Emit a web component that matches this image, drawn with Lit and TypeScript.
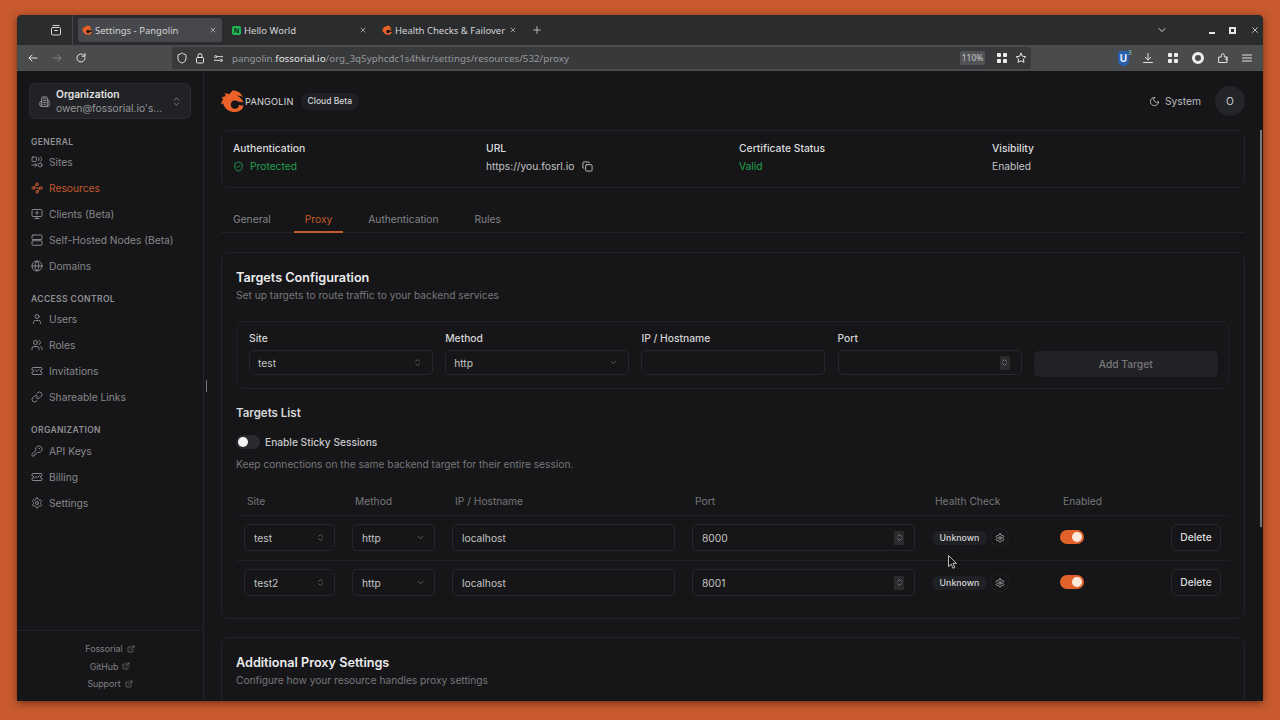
import { LitElement, html, css, svg } from 'lit';
import { customElement } from 'lit/decorators.js';

// lucide style strokes, viewBox 24
const ICONS: Record<string, unknown> = {
  building: svg`<path d="M6 22V4a2 2 0 0 1 2-2h8a2 2 0 0 1 2 2v18Z"/><path d="M6 12H4a2 2 0 0 0-2 2v6a2 2 0 0 0 2 2h2"/><path d="M18 9h2a2 2 0 0 1 2 2v9a2 2 0 0 1-2 2h-2"/><path d="M10 6h4M10 10h4M10 14h4M10 18h4"/>`,
  updown: svg`<path d="m7 15 5 5 5-5"/><path d="m7 9 5-5 5 5"/>`,
  down: svg`<path d="m6 9 6 6 6-6"/>`,
  sites: svg`<rect x="2" y="2" width="9" height="9" rx="2"/><path d="M15 3c2 1.500 2 5.500 0 7"/><path d="M19 2c3.500 2.500 3.500 6.500 0 9"/><circle cx="18" cy="18" r="4"/><path d="M2 18h9"/><path d="m8 14.500 3.500 3.500L8 21.500"/>`,
  waypoints: svg`<circle cx="12" cy="4.500" r="2.500"/><path d="m10.200 6.300-3.900 3.900"/><circle cx="4.500" cy="12" r="2.500"/><path d="M7 12h10"/><circle cx="19.500" cy="12" r="2.500"/><path d="m13.800 17.700 3.900-3.900"/><circle cx="12" cy="19.500" r="2.500"/>`,
  monitor: svg`<path d="m9 10 3-3 3 3"/><path d="M12 13V7"/><rect x="2" y="3" width="20" height="14" rx="2"/><path d="M12 17v4M8 21h8"/>`,
  server: svg`<rect x="2" y="2" width="20" height="9" rx="2"/><rect x="2" y="13.500" width="20" height="9" rx="2"/>`,
  globe: svg`<circle cx="12" cy="12" r="10"/><path d="M12 2a14.500 14.500 0 0 0 0 20 14.500 14.500 0 0 0 0-20"/><path d="M2 12h20"/>`,
  user: svg`<path d="M19 21v-2a4 4 0 0 0-4-4H9a4 4 0 0 0-4 4v2"/><circle cx="12" cy="7" r="4"/>`,
  users: svg`<path d="M16 21v-2a4 4 0 0 0-4-4H6a4 4 0 0 0-4 4v2"/><circle cx="9" cy="7" r="4"/><path d="M22 21v-2a4 4 0 0 0-3-3.870"/><path d="M16 3.130a4 4 0 0 1 0 7.750"/>`,
  ticket: svg`<path d="M2 9a3 3 0 0 1 0 6v2a2 2 0 0 0 2 2h16a2 2 0 0 0 2-2v-2a3 3 0 0 1 0-6V7a2 2 0 0 0-2-2H4a2 2 0 0 0-2 2Z"/><path d="m8 9 4 4 4-4"/>`,
  billing: svg`<path d="M2 9a3 3 0 0 1 0 6v2a2 2 0 0 0 2 2h16a2 2 0 0 0 2-2v-2a3 3 0 0 1 0-6V7a2 2 0 0 0-2-2H4a2 2 0 0 0-2 2Z"/><path d="m7 14 3-3 3 2 4-4"/>`,
  link: svg`<path d="M10 13a5 5 0 0 0 7.540.540l3-3a5 5 0 0 0-7.070-7.070l-1.720 1.710"/><path d="M14 11a5 5 0 0 0-7.540-.540l-3 3a5 5 0 0 0 7.070 7.070l1.710-1.710"/>`,
  key: svg`<path d="M2.586 17.414A2 2 0 0 0 2 18.828V21a1 1 0 0 0 1 1h3a1 1 0 0 0 1-1v-1a1 1 0 0 1 1-1h1a1 1 0 0 0 1-1v-1a1 1 0 0 1 1-1h.172a2 2 0 0 0 1.414-.586l.814-.814a6.500 6.500 0 1 0-4-4z"/><circle cx="16.500" cy="7.500" r=".5"/>`,
  cog: svg`<path d="M12.220 2h-.44a2 2 0 0 0-2 2v.18a2 2 0 0 1-1 1.730l-.43.25a2 2 0 0 1-2 0l-.15-.08a2 2 0 0 0-2.730.73l-.22.38a2 2 0 0 0 .73 2.730l.15.1a2 2 0 0 1 1 1.720v.51a2 2 0 0 1-1 1.740l-.15.09a2 2 0 0 0-.73 2.730l.22.38a2 2 0 0 0 2.730.73l.15-.08a2 2 0 0 1 2 0l.43.25a2 2 0 0 1 1 1.730V20a2 2 0 0 0 2 2h.44a2 2 0 0 0 2-2v-.18a2 2 0 0 1 1-1.730l.43-.25a2 2 0 0 1 2 0l.15.08a2 2 0 0 0 2.730-.73l.22-.39a2 2 0 0 0-.73-2.730l-.15-.08a2 2 0 0 1-1-1.740v-.5a2 2 0 0 1 1-1.740l.15-.09a2 2 0 0 0 .73-2.730l-.22-.38a2 2 0 0 0-2.730-.73l-.15.08a2 2 0 0 1-2 0l-.43-.25a2 2 0 0 1-1-1.730V4a2 2 0 0 0-2-2z"/><circle cx="12" cy="12" r="3"/>`,
  external: svg`<path d="M15 3h6v6"/><path d="M10 14 21 3"/><path d="M18 13v6a2 2 0 0 1-2 2H5a2 2 0 0 1-2-2V8a2 2 0 0 1 2-2h6"/>`,
  moon: svg`<path d="M12 3a6 6 0 0 0 9 9 9 9 0 1 1-9-9Z"/>`,
  shieldCheck: svg`<path d="M20 13c0 5-3.500 7.500-7.660 8.950a1 1 0 0 1-.67-.01C7.500 20.500 4 18 4 13V6a1 1 0 0 1 1-1c2 0 4.500-1.200 6.240-2.720a1.170 1.170 0 0 1 1.520 0C14.510 3.810 17 5 19 5a1 1 0 0 1 1 1z"/><path d="m9 12 2 2 4-4"/>`,
  shield: svg`<path d="M20 13c0 5-3.500 7.500-7.660 8.950a1 1 0 0 1-.67-.01C7.500 20.500 4 18 4 13V6a1 1 0 0 1 1-1c2 0 4.500-1.200 6.240-2.720a1.170 1.170 0 0 1 1.520 0C14.510 3.810 17 5 19 5a1 1 0 0 1 1 1z"/>`,
  copy: svg`<rect x="8" y="8" width="14" height="14" rx="2"/><path d="M4 16c-1.100 0-2-.9-2-2V4c0-1.100.9-2 2-2h10c1.100 0 2 .9 2 2"/>`,
  // browser chrome
  tabsBtn: svg`<rect x="3" y="7" width="18" height="15" rx="2"/><path d="M6 3h12"/><path d="M9 13h6"/>`,
  back: svg`<path d="M20 12H4"/><path d="m10 6-6 6 6 6"/>`,
  forward: svg`<path d="M4 12h16"/><path d="m14 6 6 6-6 6"/>`,
  reload: svg`<path d="M20 12a8 8 0 1 1-2.500-5.800L20 8.500"/><path d="M20 3v5.500h-5.500"/>`,
  lock: svg`<rect x="5" y="11" width="14" height="11" rx="2"/><path d="M8 11V7a4 4 0 0 1 8 0v4"/>`,
  perms: svg`<path d="M10 8h11"/><circle cx="6" cy="8" r="2.500"/><path d="M3 16h11"/><circle cx="18" cy="16" r="2.500"/>`,
  star: svg`<path d="M12 2.500l2.950 6 6.600.95-4.780 4.650 1.130 6.570L12 17.570l-5.900 3.100 1.130-6.570-4.780-4.650 6.600-.95z"/>`,
  download: svg`<path d="M12 3v13"/><path d="m6.500 10.500 5.500 5.500 5.500-5.500"/><path d="M3 21h18"/>`,
  puzzle: svg`<path d="M4 10h4.500V6.500a3 3 0 0 1 6 0V10H20v11H4z"/><path d="M20 10v3h-2v3h2"/>`,
  menu: svg`<path d="M3 6h18M3 12h18M3 18h18"/>`,
  plus: svg`<path d="M12 4v16M4 12h16"/>`,
  close: svg`<path d="M6 6l12 12M18 6 6 18"/>`,
};

const icon = (name: string, cls = '') =>
  html`<svg class="ic ${cls}" viewBox="0 0 24 24" fill="none" stroke="currentColor" stroke-width="2" stroke-linecap="round" stroke-linejoin="round">${ICONS[name]}</svg>`;

const logoMark = (cls: string) => html`<svg class=${cls} viewBox="0 0 24 24">
  <path fill="#e8622a" d="M12 1C17 .8 21 3.500 22.800 8 20.800 6.700 18.500 6.200 16.500 6.600 20.500 8 23.500 11.500 23.500 16 23.500 20.500 19.500 23.500 14.500 23.500 8.500 23.500 3.500 20 2.300 14.500L.2 15.500C.5 13 1.300 11.300 2.500 10L.3 8.700C1.800 7.500 3.500 7 5 7L3.800 4.300C5.800 4 7.400 4.300 8.700 5Z"/>
  <circle cx="14.500" cy="15.800" r="4.200" fill="#161618"/>
  <path fill="#161618" d="M17 12.500 24 13.500 23.500 17 18 16Z"/>
</svg>`;

type NavItem = { label: string; icon: string; active?: boolean };
const NAV: { title: string; items: NavItem[] }[] = [
  {
    title: 'GENERAL',
    items: [
      { label: 'Sites', icon: 'sites' },
      { label: 'Resources', icon: 'waypoints', active: true },
      { label: 'Clients (Beta)', icon: 'monitor' },
      { label: 'Self-Hosted Nodes (Beta)', icon: 'server' },
      { label: 'Domains', icon: 'globe' },
    ],
  },
  {
    title: 'ACCESS CONTROL',
    items: [
      { label: 'Users', icon: 'user' },
      { label: 'Roles', icon: 'users' },
      { label: 'Invitations', icon: 'ticket' },
      { label: 'Shareable Links', icon: 'link' },
    ],
  },
  {
    title: 'ORGANIZATION',
    items: [
      { label: 'API Keys', icon: 'key' },
      { label: 'Billing', icon: 'billing' },
      { label: 'Settings', icon: 'cog' },
    ],
  },
];

const TARGETS = [
  { site: 'test', port: '8000' },
  { site: 'test2', port: '8001' },
];

@customElement('app-root')
export class AppRoot extends LitElement {
  static styles = css`
    :host {
      display: block;
      width: 1280px;
      height: 720px;
      box-sizing: border-box;
      padding: 15px 17px 19px;
      background: #c85a2e;
      font-family: Inter, 'Liberation Sans', sans-serif;
      color: #d8d8da;
      overflow: hidden;
    }
    * { box-sizing: border-box; }
    .ic { display: block; flex: none; width: 13px; height: 13px; }
    .i8 { width: 8px; height: 8px; }
    .i9 { width: 9px; height: 9px; }
    .i10 { width: 10px; height: 10px; }
    .i11 { width: 11px; height: 11px; }
    .i12 { width: 12px; height: 12px; }

    .window {
      position: relative;
      height: 686px;
      display: flex;
      flex-direction: column;
      border-radius: 5px 5px 0 0;
      overflow: hidden;
      background: #161618;
      box-shadow: 0 2px 8px rgba(40, 12, 0, 0.55);
    }

    /* browser chrome */
    .tabstrip {
      height: 30px;
      flex: none;
      display: flex;
      align-items: center;
      background: #2b2c2e;
      color: #d4d4d6;
      font-family: 'Noto Sans', sans-serif;
      font-size: 9.500px;
    }
    .tabs-btn {
      width: 56px;
      height: 30px;
      display: flex;
      align-items: center;
      justify-content: center;
      padding-left: 29px;
      padding-right: 6px;
      border-right: 1px solid #46474a;
      flex: none;
    }
    .tabs { display: flex; gap: 6px; margin-left: 5px; }
    .tab {
      width: 144px;
      height: 24px;
      padding: 0 5px 0 4px;
      display: flex;
      align-items: center;
      gap: 3px;
      border-radius: 3px;
    }
    .tab.on { background: #47484b; }
    .tab span { flex: 1; white-space: nowrap; overflow: hidden; }
    .fav { width: 10px; height: 10px; flex: none; }
    .fav-n {
      width: 9px;
      height: 9px;
      flex: none;
      border-radius: 2px;
      background: #22b455;
      color: #10241a;
      font-size: 7px;
      font-weight: 700;
      line-height: 9px;
      text-align: center;
    }
    .new-tab { margin-left: 10px; }
    .strip-end { margin-left: auto; display: flex; align-items: center; }
    .strip-end .chev { margin-right: 41px; }
    .win-ctl { display: flex; align-items: center; gap: 14px; padding-right: 3px; }
    .win-min { width: 6px; height: 2px; margin-top: 5px; background: #e6e6e6; }
    .win-max { width: 7px; height: 7px; border: 2px solid #e6e6e6; }

    .toolbar {
      height: 26px;
      flex: none;
      display: flex;
      align-items: center;
      background: #4a4b4d;
      color: #e4e4e4;
      font-family: 'Noto Sans', sans-serif;
    }
    .nav-btns { display: flex; padding-left: 4px; width: 155px; flex: none; }
    .nav-btns div { width: 24px; display: flex; justify-content: center; }
    .nav-btns .off { color: #838486; }
    .urlbar {
      width: 859px;
      height: 22px;
      flex: none;
      display: flex;
      align-items: center;
      padding: 0 4px 0 1px;
      background: #38393b;
      border-radius: 3px;
    }
    .urlbar .sl { width: 18px; display: flex; justify-content: center; }
    .url { margin-left: 5px; font-size: 9.800px; color: #97989a; white-space: nowrap; }
    .url b { font-weight: 400; color: #e4e4e4; }
    .zoom {
      margin-left: auto;
      width: 25px;
      height: 14px;
      margin-right: 12px;
      background: #525356;
      border-radius: 2px;
      font-size: 8.500px;
      line-height: 14px;
      text-align: center;
      color: #c8c8c8;
    }
    .qr { width: 10px; height: 10px; display: grid; grid-template-columns: 1fr 1fr; gap: 1.500px; }
    .urlbar .qr { margin-right: 8px; }
    .qr i { background: #eee; border-radius: 1px; }
    .tools { display: flex; align-items: center; margin-left: 80px; }
    .tools > div { width: 24.800px; display: flex; justify-content: center; }
    .vpn { position: relative; }
    .vpn .shield {
      width: 11px;
      height: 15px;
      border-radius: 3px 3px 6px 6px;
      background: #2a5fb0;
      display: flex;
      align-items: center;
      justify-content: center;
      font-size: 10px;
      font-weight: 700;
      font-family: Inter, sans-serif;
      color: #e6eefb;
    }
    .vpn small {
      position: absolute;
      top: -3px;
      right: 4px;
      font-size: 7px;
      color: #78c8d8;
    }
    .ublock { width: 12px; height: 12px; border-radius: 50%; border: 3.500px solid #eee; }

    /* app */
    .app { flex: 1; min-height: 0; display: flex; }
    .sidebar {
      width: 187px;
      flex: none;
      display: flex;
      flex-direction: column;
      padding-top: 12px;
      border-right: 1px solid #222326;
    }
    .org {
      margin: 0 12px;
      height: 36px;
      display: flex;
      align-items: center;
      padding: 0 8px 0 9px;
      gap: 6px;
      border: 1px solid #2b2c2f;
      border-radius: 6px;
      background: #212225;
    }
    .org-ic { color: #a3a3a6; }
    .org-text { flex: 1; min-width: 0; }
    .org-name { font-size: 10.250px; line-height: 14px; font-weight: 600; color: #e2e2e4; }
    .org-mail { font-size: 10.250px; line-height: 15px; color: #96969a; white-space: nowrap; }
    .org-chev { color: #85858a; }
    .group { padding: 0 14px; margin-top: 14px; }
    .org + .group { margin-top: 17px; }
    .group-title {
      font-size: 8.500px;
      line-height: 12px;
      font-weight: 600;
      letter-spacing: 0.4px;
      color: #8f8f93;
      margin-bottom: 1.200px;
    }
    .nav-item {
      height: 26px;
      display: flex;
      align-items: center;
      gap: 6px;
      font-size: 10.250px;
      color: #88888c;
    }
    .nav-item.on { color: #c4592b; }
    .side-foot {
      margin-top: auto;
      height: 71px;
      padding-top: 9px;
      border-top: 1px solid #202124;
      display: flex;
      flex-direction: column;
      align-items: center;
      color: #808084;
      font-size: 8.800px;
    }
    .side-foot div { height: 17.600px; display: flex; align-items: center; gap: 4px; }

    .main { flex: 1; min-width: 0; display: flex; }
    .content { flex: 1; min-width: 0; padding: 0 15px 0 17px; overflow: hidden; }
    .rail { width: 3px; flex: none; padding-top: 59px; padding-right: 1px; }
    .thumb { height: 397px; background: #77777a; }

    .top {
      height: 59px;
      display: flex;
      align-items: center;
      padding-top: 1px;
    }
    .logo { width: 23px; height: 24px; flex: none; }
    .brand { margin-left: 1px; font-size: 9.200px; letter-spacing: 0.2px; color: #dcdcde; }
    .beta {
      margin-left: 7px;
      height: 17px;
      padding: 0 7px;
      border-radius: 9px;
      background: #1f2023;
      font-size: 8.500px;
      font-weight: 500;
      line-height: 17px;
      color: #d4d4d6;
    }
    .top-end { margin-left: auto; display: flex; align-items: center; font-size: 10.250px; color: #bdbdc0; }
    .top-end .ic { margin-right: 5px; }
    .avatar {
      width: 30px;
      height: 30px;
      margin-left: 14px;
      border-radius: 50%;
      background: #242528;
      display: flex;
      align-items: center;
      justify-content: center;
      color: #c8c8ca;
    }

    .card { border: 1px solid #222326; border-radius: 8px; }
    .info {
      height: 58px;
      padding: 10px 11px 0;
      display: grid;
      grid-template-columns: repeat(4, 253px);
    }
    .info-label { font-size: 10.350px; line-height: 14px; font-weight: 500; color: #dcdcde; }
    .info-val { margin-top: 3px; height: 16px; display: flex; align-items: center; font-size: 10.250px; color: #c4c4c6; }
    .green { color: #22a04c; gap: 6px; }
    .copy { margin-left: 8px; color: #c4c4c6; }

    .page-tabs {
      height: 45px;
      display: flex;
      align-items: flex-end;
      border-bottom: 1px solid #212225;
      font-size: 10.250px;
      color: #838387;
    }
    .page-tab { height: 22px; padding: 2px 11px 0; margin-right: 14px; margin-bottom: -1px; }
    .page-tab:first-child { padding-left: 12px; margin-right: 12px; }
    .page-tab.on { color: #c4592b; border-bottom: 2px solid #c4592b; }

    .section { margin-top: 18px; padding: 15px 15px 0 14px; }
    .targets { margin-top: 19px; height: 367px; }
    .h2 { font-size: 12.650px; line-height: 20px; font-weight: 600; color: #ececee; }
    .sub { font-size: 10.200px; line-height: 15px; color: #77777b; }
    .extra { height: 90px; }

    .add-form {
      margin-top: 18px;
      height: 68px;
      padding: 9px 12px 0;
      border: 1px solid #202124;
      border-radius: 7px;
      display: grid;
      grid-template-columns: repeat(5, 184px);
      column-gap: 12.200px;
    }
    .lbl { font-size: 10.300px; line-height: 14px; font-weight: 500; color: #d4d4d6; margin-bottom: 5px; }
    .field {
      display: flex;
      align-items: center;
      justify-content: space-between;
      border: 1px solid #27282b;
      border-radius: 5px;
      padding: 0 9px;
      font-size: 10.250px;
      color: #c4c4c6;
    }
    .add-form .field { height: 25px; padding: 0 10px 0 8px; }
    .spin {
      width: 10px;
      height: 14px;
      margin-right: 1px;
      background: #2a2b2d;
      color: #8c8c90;
      display: flex;
      align-items: center;
      justify-content: center;
      border-radius: 1px;
    }
    .add-btn {
      align-self: end;
      height: 26px;
      margin-bottom: 11px;
      border-radius: 5px;
      background: #212225;
      color: #78787c;
      font-size: 10.250px;
      font-weight: 500;
      line-height: 26px;
      text-align: center;
    }

    .h3 { margin-top: 15px; font-size: 11.500px; line-height: 18px; font-weight: 600; color: #d8d8da; }
    .sticky { margin-top: 13px; height: 14px; display: flex; align-items: center; gap: 5px; font-size: 10.200px; font-weight: 500; color: #c8c8ca; }
    .sw {
      width: 24px;
      height: 14px;
      flex: none;
      border-radius: 7px;
      background: #292a2d;
      padding: 2px;
    }
    .sw i { display: block; width: 10px; height: 10px; border-radius: 50%; background: #f4f4f4; }
    .sw.on { background: #e0622a; padding-left: 12px; }
    .sw.on i { background: #fde9dc; }
    .sticky-note { margin-top: 8px; font-size: 10.200px; line-height: 15px; color: #77777b; }

    .tbl-head, .tbl-row {
      display: grid;
      grid-template-columns: 108px 100px 240px 240px 128px 60px 1fr;
      padding: 0 8px;
      align-items: center;
      border-bottom: 1px solid #1f2023;
    }
    .tbl-head {
      margin-top: 22px;
      height: 22px;
      font-size: 10.250px;
      color: #77777b;
      padding-bottom: 7px;
    }
    .tbl-head div { padding-left: 3px; }
    .tbl-row { height: 44.500px; }
    .tbl-row:last-child { border-bottom: 0; }
    .tbl-row .field { height: 27px; }
    .w-site { width: 91px; }
    .w-method { width: 83px; }
    .w-wide { width: 223px; }
    .chev-dim { color: #707074; }
    .health { display: flex; align-items: center; gap: 3px; }
    .badge {
      height: 14px;
      width: 55px;
      border-radius: 7px;
      background: #202124;
      font-size: 8.800px;
      font-weight: 500;
      line-height: 14px;
      text-align: center;
      color: #d4d4d6;
    }
    .gear {
      width: 19px;
      height: 19px;
      border: 1px solid #1f2023;
      border-radius: 50%;
      display: flex;
      align-items: center;
      justify-content: center;
      color: #b0b0b3;
    }
    .row-sw { margin-top: -2px; }
    .del {
      justify-self: end;
      width: 50px;
      height: 27px;
      border: 1px solid #27282b;
      border-radius: 6px;
      font-size: 10.250px;
      font-weight: 500;
      line-height: 25px;
      text-align: center;
      color: #dcdcde;
    }

    /* overlays */
    .handle { position: absolute; left: 189px; top: 365px; width: 1px; height: 12px; background: #77777a; }
    .cursor { position: absolute; left: 931px; top: 540px; width: 9px; height: 14px; }
  `;

  renderNav() {
    return NAV.map(
      (g) => html`<div class="group">
        <div class="group-title">${g.title}</div>
        ${g.items.map(
          (it) => html`<div class="nav-item ${it.active ? 'on' : ''}">${icon(it.icon, 'i12')}<span>${it.label}</span></div>`,
        )}
      </div>`,
    );
  }

  renderChrome() {
    return html`
      <div class="tabstrip">
        <div class="tabs-btn">${icon('tabsBtn', 'i12')}</div>
        <div class="tabs">
          <div class="tab on">${logoMark('fav')}<span>Settings - Pangolin</span>${icon('close', 'i8')}</div>
          <div class="tab"><div class="fav-n">N</div><span>Hello World</span>${icon('close', 'i8')}</div>
          <div class="tab">${logoMark('fav')}<span>Health Checks &amp; Failover</span>${icon('close', 'i8')}</div>
        </div>
        <div class="new-tab">${icon('plus', 'i10')}</div>
        <div class="strip-end">
          <div class="chev">${icon('down', 'i12')}</div>
          <div class="win-ctl">
            <div class="win-min"></div>
            <div class="win-max"></div>
            ${icon('close', 'i10')}
          </div>
        </div>
      </div>
      <div class="toolbar">
        <div class="nav-btns">
          <div>${icon('back', 'i12')}</div>
          <div class="off">${icon('forward', 'i12')}</div>
          <div>${icon('reload', 'i12')}</div>
        </div>
        <div class="urlbar">
          <div class="sl">${icon('shield', 'i12')}</div>
          <div class="sl">${icon('lock', 'i12')}</div>
          <div class="sl">${icon('perms', 'i11')}</div>
          <div class="url">pangolin.<b>fossorial.io</b>/org_3q5yphcdc1s4hkr/settings/resources/532/proxy</div>
          <div class="zoom">110%</div>
          <div class="qr"><i></i><i></i><i></i><i></i></div>
          <div class="star">${icon('star', 'i12')}</div>
        </div>
        <div class="tools">
          <div class="vpn"><div class="shield">U</div><small>3</small></div>
          <div>${icon('download', 'i12')}</div>
          <div><div class="qr"><i></i><i></i><i></i><i></i></div></div>
          <div><div class="ublock"></div></div>
          <div>${icon('puzzle', 'i12')}</div>
          <div>${icon('menu', 'i12')}</div>
        </div>
      </div>
    `;
  }

  renderRow(t: { site: string; port: string }) {
    return html`<div class="tbl-row">
      <div class="field w-site">${t.site}<span class="chev-dim">${icon('updown', 'i9')}</span></div>
      <div class="field w-method">http<span class="chev-dim">${icon('down', 'i9')}</span></div>
      <div class="field w-wide">localhost</div>
      <div class="field w-wide">${t.port}<span class="spin">${icon('updown', 'i9')}</span></div>
      <div class="health">
        <div class="badge">Unknown</div>
        <div class="gear">${icon('cog', 'i10')}</div>
      </div>
      <div class="sw on row-sw"><i></i></div>
      <div class="del">Delete</div>
    </div>`;
  }

  render() {
    return html`<div class="window">
      ${this.renderChrome()}
      <div class="app">
        <aside class="sidebar">
          <div class="org">
            <span class="org-ic">${icon('building', 'i11')}</span>
            <div class="org-text">
              <div class="org-name">Organization</div>
              <div class="org-mail">owen@fossorial.io's...</div>
            </div>
            <span class="org-chev">${icon('updown', 'i11')}</span>
          </div>
          ${this.renderNav()}
          <div class="side-foot">
            <div>Fossorial ${icon('external', 'i8')}</div>
            <div>GitHub ${icon('external', 'i8')}</div>
            <div>Support ${icon('external', 'i8')}</div>
          </div>
        </aside>
        <div class="main">
          <div class="content">
            <header class="top">
              ${logoMark('logo')}
              <span class="brand">PANGOLIN</span>
              <span class="beta">Cloud Beta</span>
              <div class="top-end">
                ${icon('moon', 'i11')}<span>System</span>
                <div class="avatar">O</div>
              </div>
            </header>

            <div class="card info">
              <div>
                <div class="info-label">Authentication</div>
                <div class="info-val green">${icon('shieldCheck', 'i11')}Protected</div>
              </div>
              <div>
                <div class="info-label">URL</div>
                <div class="info-val">https://you.fosrl.io<span class="copy">${icon('copy', 'i11')}</span></div>
              </div>
              <div>
                <div class="info-label">Certificate Status</div>
                <div class="info-val green">Valid</div>
              </div>
              <div>
                <div class="info-label">Visibility</div>
                <div class="info-val">Enabled</div>
              </div>
            </div>

            <nav class="page-tabs">
              <div class="page-tab">General</div>
              <div class="page-tab on">Proxy</div>
              <div class="page-tab">Authentication</div>
              <div class="page-tab">Rules</div>
            </nav>

            <section class="card section targets">
              <div class="h2">Targets Configuration</div>
              <div class="sub">Set up targets to route traffic to your backend services</div>

              <div class="add-form">
                <div>
                  <div class="lbl">Site</div>
                  <div class="field">test<span class="chev-dim">${icon('updown', 'i9')}</span></div>
                </div>
                <div>
                  <div class="lbl">Method</div>
                  <div class="field">http<span class="chev-dim">${icon('down', 'i9')}</span></div>
                </div>
                <div>
                  <div class="lbl">IP / Hostname</div>
                  <div class="field"></div>
                </div>
                <div>
                  <div class="lbl">Port</div>
                  <div class="field"><span></span><span class="spin">${icon('updown', 'i9')}</span></div>
                </div>
                <div class="add-btn">Add Target</div>
              </div>

              <div class="h3">Targets List</div>
              <div class="sticky"><div class="sw"><i></i></div>Enable Sticky Sessions</div>
              <div class="sticky-note">Keep connections on the same backend target for their entire session.</div>

              <div class="tbl-head">
                <div>Site</div>
                <div>Method</div>
                <div>IP / Hostname</div>
                <div>Port</div>
                <div>Health Check</div>
                <div>Enabled</div>
              </div>
              ${TARGETS.map((t) => this.renderRow(t))}
            </section>

            <section class="card section extra">
              <div class="h2">Additional Proxy Settings</div>
              <div class="sub">Configure how your resource handles proxy settings</div>
            </section>
          </div>
          <div class="rail"><div class="thumb"></div></div>
        </div>
      </div>
      <div class="handle"></div>
      <svg class="cursor" viewBox="0 0 9 14"><path d="M.5.5v11l2.700-2.400 1.800 4.200 1.800-.8L5 8.400h3.500z" fill="#111" stroke="#e8e8e8" stroke-width=".8"/></svg>
    </div>`;
  }
}
